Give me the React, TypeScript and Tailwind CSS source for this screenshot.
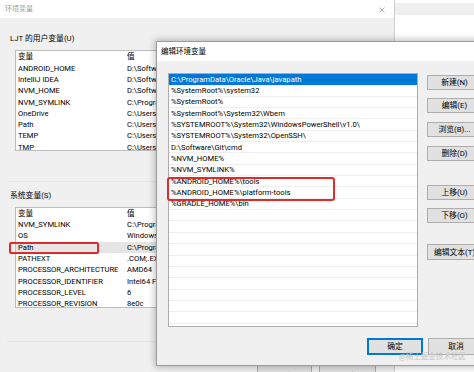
const userVars = [
  ['ANDROID_HOME', 'D:\\Software\\Android\\sdk'],
  ['IntelliJ IDEA', 'D:\\Software\\IntelliJ IDEA\\bin;'],
  ['NVM_HOME', 'D:\\Software\\nvm'],
  ['NVM_SYMLINK', 'C:\\Program Files\\nodejs'],
  ['OneDrive', 'C:\\Users\\LJT\\OneDrive'],
  ['Path', 'C:\\Users\\LJT\\AppData\\Local\\Microsoft\\WindowsApps;'],
  ['TEMP', 'C:\\Users\\LJT\\AppData\\Local\\Temp'],
  ['TMP', 'C:\\Users\\LJT\\AppData\\Local\\Temp'],
]

const systemVars = [
  ['NVM_SYMLINK', 'C:\\Program Files\\nodejs'],
  ['OS', 'Windows_NT'],
  ['Path', 'C:\\ProgramData\\Oracle\\Java\\javapath;'],
  ['PATHEXT', '.COM;.EXE;.BAT;.CMD;.VBS'],
  ['PROCESSOR_ARCHITECTURE', 'AMD64'],
  ['PROCESSOR_IDENTIFIER', 'Intel64 Family 6 Model 142'],
  ['PROCESSOR_LEVEL', '6'],
  ['PROCESSOR_REVISION', '8e0c'],
]

const paths = [
  'C:\\ProgramData\\Oracle\\Java\\javapath',
  '%SystemRoot%\\system32',
  '%SystemRoot%',
  '%SystemRoot%\\System32\\Wbem',
  '%SYSTEMROOT%\\System32\\WindowsPowerShell\\v1.0\\',
  '%SYSTEMROOT%\\System32\\OpenSSH\\',
  'D:\\Software\\Git\\cmd',
  '%NVM_HOME%',
  '%NVM_SYMLINK%',
  '%ANDROID_HOME%\\tools',
  '%ANDROID_HOME%\\platform-tools',
  '%GRADLE_HOME%\\bin',
]

function VarList({ rows, selected }: { rows: string[][]; selected?: number }) {
  return (
    <div className="ml-[5px] h-[101px] border border-[#bdbdbd] bg-white overflow-hidden">
      <div className="flex h-[11.5px] items-center">
        <span className="w-[109px] pl-[2px]">变量</span>
        <span className="pl-[2px]">值</span>
      </div>
      {rows.map(([name, value], i) => (
        <div
          key={name}
          className={`flex h-[11.3px] items-center whitespace-nowrap ${i === selected ? 'bg-[#e5e5e5]' : ''}`}
        >
          <span className="w-[109px] shrink-0 pl-[2px]">{name}</span>
          <span className="pl-[2px]">{value}</span>
        </div>
      ))}
    </div>
  )
}

function WinButton({ label, className = '' }: { label: string; className?: string }) {
  return (
    <div
      className={`flex items-center justify-center border border-[#adadad] bg-[#e1e1e1] text-[7.8px] ${className}`}
    >
      {label}
    </div>
  )
}

export default function App() {
  const rows = Array.from({ length: 23 }, (_, i) => paths[i] ?? '')

  return (
    <div className="relative w-[474px] h-[372px] overflow-hidden bg-white font-['Roboto','Noto_Sans_CJK_SC',sans-serif] text-[7.6px] leading-[11px] text-black">
      {/* window further behind, right side */}
      <div className="absolute left-[395px] top-0 right-0 h-[60px] bg-white">
        <div className="mt-[3px] h-[12px] bg-[#efefef]" />
      </div>

      {/* 环境变量 window */}
      <div className="absolute left-0 top-0 w-[395px] h-[420px] bg-[#f0f0f0] border-r border-[#cfcfcf] flex flex-col">
        <div className="h-[18px] bg-white flex items-center justify-between pl-[5px] pr-[9px] text-[7px] text-[#9a9a9a]">
          <span>环境变量</span>
          <svg width="6" height="6" viewBox="0 0 6 6" className="mt-[1px]">
            <path d="M0.5 0.5 L5.5 5.5 M5.5 0.5 L0.5 5.5" stroke="#a0a0a0" strokeWidth="0.8" />
          </svg>
        </div>
        <div className="px-[10px] flex flex-col">
          <div className="mt-[15px] h-[11px] text-[7.8px]">LJT 的用户变量(U)</div>
          <div className="mt-[6px]">
            <VarList rows={userVars} />
          </div>
          <div className="mt-[30px] h-px bg-[#e6e6e6] -mx-[3px]" />
          <div className="mt-[8px] h-[11px] text-[7.8px]">系统变量(S)</div>
          <div className="mt-[5.5px]">
            <VarList rows={systemVars} selected={2} />
          </div>
          <div className="mt-[33px] h-px bg-[#e4e4e4] -mx-[3px]" />
          <div className="mt-[22px] flex justify-end gap-[7px] pr-[8px]">
            <WinButton label="确定" className="w-[55px] h-[26px]" />
            <WinButton label="取消" className="w-[57px] h-[26px]" />
          </div>
        </div>
      </div>

      {/* 编辑环境变量 dialog */}
      <div className="absolute left-[156px] top-[41px] w-[340px] h-[325px] bg-[#f0f0f0] border border-[#9c9c9c] shadow-[0_0_7px_1px_rgba(0,0,0,0.28)] flex flex-col">
        <div className="h-[19px] bg-white flex items-center pl-[4px] text-[7.5px]">编辑环境变量</div>
        <div className="pl-[11px] pt-[12px] flex flex-col">
          <div className="flex gap-[9px]">
            <div className="w-[250px] h-[254px] border border-[#adadad] bg-white overflow-hidden">
              {rows.map((p, i) => (
                <div
                  key={i}
                  className={`h-[11.35px] flex items-center pl-[2px] whitespace-nowrap border-b ${
                    i === 0 ? 'bg-[#0078d7] text-white border-[#0078d7]' : 'border-[#efefef]'
                  }`}
                >
                  {p}
                </div>
              ))}
            </div>
            <div className="flex flex-col w-[55px]">
              <WinButton label="新建(N)" className="mt-[2px] h-[15px]" />
              <WinButton label="编辑(E)" className="mt-[8px] h-[15px]" />
              <WinButton label="浏览(B)..." className="mt-[9px] h-[15px]" />
              <WinButton label="删除(D)" className="mt-[9px] h-[15px]" />
              <WinButton label="上移(U)" className="mt-[24px] h-[15px]" />
              <WinButton label="下移(O)" className="mt-[8px] h-[15px]" />
              <WinButton label="编辑文本(T)" className="mt-[21px] h-[16px]" />
            </div>
          </div>
          <div className="mt-[11px] ml-[199px] flex gap-[5px]">
            <WinButton label="确定" className="w-[56px] h-[17px] !border-2 !border-[#0078d7]" />
            <WinButton label="取消" className="w-[56px] h-[17px]" />
          </div>
        </div>
      </div>

      {/* red highlight boxes */}
      <div className="absolute left-[9px] top-[242px] w-[90px] h-[12px] border-2 border-[#e02b2b] rounded-[2px]" />
      <div className="absolute left-[167px] top-[177px] w-[168px] h-[24px] border-2 border-[#e02b2b] rounded-[3px]" />

      {/* watermark */}
      <div className="absolute left-[399px] top-[353px] text-[7.5px] leading-none text-[#c4c4c4]">
        @稀土掘金技术社区
      </div>
    </div>
  )
}
